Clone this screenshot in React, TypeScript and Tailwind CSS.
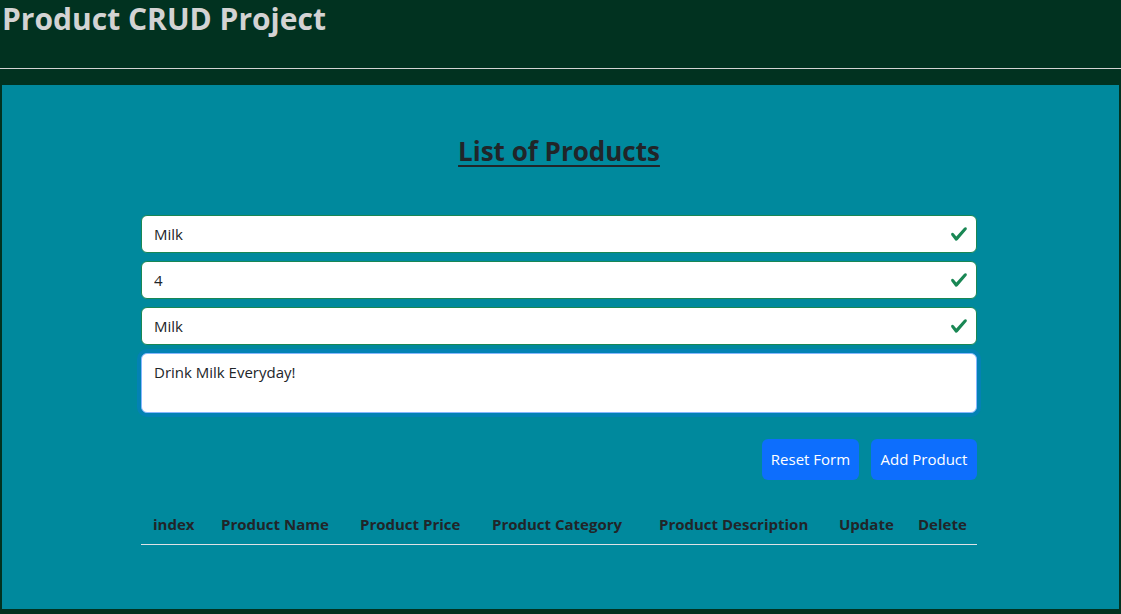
import { useState } from 'react'

function ValidIcon() {
  return (
    <svg
      viewBox="0 0 8 8"
      className="pointer-events-none absolute right-[9px] top-1/2 h-[18px] w-[18px] -translate-y-1/2"
    >
      <path
        fill="#198754"
        d="M2.3 6.73.6 4.53c-.4-1.04.46-1.4 1.1-.8l1.1 1.4 3.4-3.8c.6-.63 1.6-.27 1.2.7l-4 4.6c-.43.5-.8.4-1.1.1z"
      />
    </svg>
  )
}

const headers = [
  { label: 'index', w: 'w-[72px] pl-[12px]' },
  { label: 'Product Name', w: 'w-[139px]' },
  { label: 'Product Price', w: 'w-[132px]' },
  { label: 'Product Category', w: 'w-[167px]' },
  { label: 'Product Description', w: 'w-[180px]' },
  { label: 'Update', w: 'w-[79px]' },
  { label: 'Delete', w: 'w-[67px]' },
]

function App() {
  const [name, setName] = useState('Milk')
  const [price, setPrice] = useState('4')
  const [category, setCategory] = useState('Milk')
  const [desc, setDesc] = useState('Drink Milk Everyday!')

  return (
    <div className="min-h-screen bg-[#013220] font-['Open_Sans',sans-serif] text-[#212529]">
      {/* Header Section */}
      <h1 className="h-[42px] pl-[2px] text-[30px] font-bold leading-[38px] text-[#d3d3d3]">
        Product CRUD Project
      </h1>
      <hr className="mt-[26px] border-t border-[#d3d3d3]" />

      <main className="mx-[2px] mt-4 bg-[#00899d] pb-[64px] pl-[1px] pr-[4px] pt-[49px]">
        <h3 className="text-center text-[26px] font-bold leading-[34px] underline decoration-2 underline-offset-[4px]">
          List of Products
        </h3>

        <form className="mx-auto mt-[47px] w-[836px]" onSubmit={(e) => e.preventDefault()}>
          <div className="relative mb-2">
            <input
              value={name}
              onChange={(e) => setName(e.target.value)}
              className="h-[38px] w-full rounded-md border border-[#198754] bg-white px-3 pr-9 text-[15px] outline-none"
            />
            <ValidIcon />
          </div>
          <div className="relative mb-2">
            <input
              value={price}
              onChange={(e) => setPrice(e.target.value)}
              className="h-[38px] w-full rounded-md border border-[#198754] bg-white px-3 pr-9 text-[15px] outline-none"
            />
            <ValidIcon />
          </div>
          <div className="relative mb-2">
            <input
              value={category}
              onChange={(e) => setCategory(e.target.value)}
              className="h-[38px] w-full rounded-md border border-[#198754] bg-white px-3 pr-9 text-[15px] outline-none"
            />
            <ValidIcon />
          </div>
          <textarea
            value={desc}
            onChange={(e) => setDesc(e.target.value)}
            className="block h-[60px] w-full resize-none rounded-md border border-[#86b7fe] bg-white px-3 py-[6px] text-[15px] leading-6 shadow-[0_0_0_4px_rgba(13,110,253,0.25)] outline-none"
          />

          <div className="mt-[26px] flex justify-end gap-3">
            <button
              type="reset"
              className="h-[41px] w-[97px] rounded-md bg-[#0d6efd] text-[15px] text-white"
            >
              Reset Form
            </button>
            <button
              type="submit"
              className="h-[41px] w-[106px] rounded-md bg-[#0d6efd] text-[15px] text-white"
            >
              Add Product
            </button>
          </div>
        </form>

        <table className="mx-auto mt-6 w-[836px] border-collapse text-left">
          <thead>
            <tr className="border-b border-[#dee2e6]">
              {headers.map((h) => (
                <th
                  key={h.label}
                  className={`${h.w} whitespace-nowrap py-2 pl-2 text-[15px] font-bold leading-6`}
                >
                  {h.label}
                </th>
              ))}
            </tr>
          </thead>
          <tbody></tbody>
        </table>
      </main>
    </div>
  )
}

export default App
